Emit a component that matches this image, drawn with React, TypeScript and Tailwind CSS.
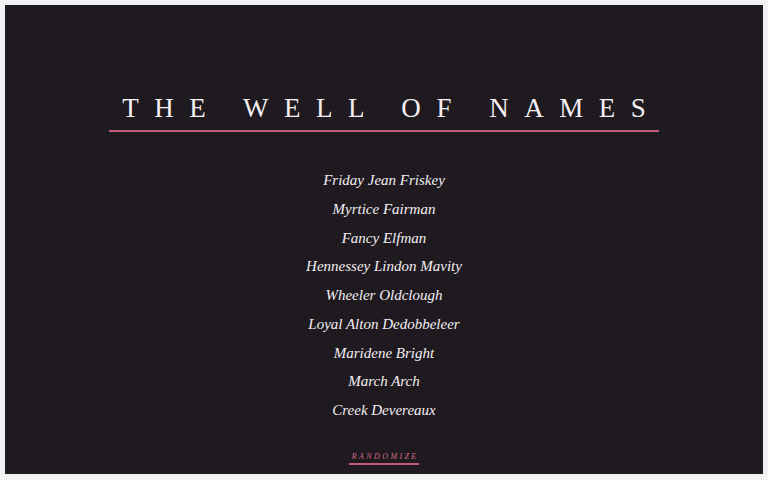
import React from 'react';

const names = [
  'Friday Jean Friskey',
  'Myrtice Fairman',
  'Fancy Elfman',
  'Hennessey Lindon Mavity',
  'Wheeler Oldclough',
  'Loyal Alton Dedobbeleer',
  'Maridene Bright',
  'March Arch',
  'Creek Devereaux',
];

export default function App() {
  return (
    <div className="w-[768px] h-[480px] bg-[#f2f1f3] p-[5px] pb-[6px] pr-[5px]" style={{ fontFamily: '"Liberation Serif", serif' }}>
      <div className="h-full bg-[#1e1a1f] flex flex-col items-center text-[#f4eff2]">
        <div className="mt-[88px] w-[550px] flex flex-col items-center">
          <h1 className="text-[27px] leading-[30px] tracking-[0.575em] pl-[0.575em] font-normal whitespace-nowrap">
            THE WELL OF NAMES
          </h1>
          <div className="mt-[7px] w-full h-[2px] bg-[#c45a7a]" />
        </div>
        <ul className="mt-[39px] flex flex-col items-center gap-[9.75px]">
          {names.map((n) => (
            <li key={n} className="italic text-[15px] leading-[19px]">
              {n}
            </li>
          ))}
        </ul>
        <button className="mt-auto mb-[9px] text-[8px] italic tracking-[0.3em] pl-[0.3em] text-[#d26a8a] border-b-2 border-[#c45a7a] pb-[1px] leading-[10px]">
          RANDOMIZE
        </button>
      </div>
    </div>
  );
}
